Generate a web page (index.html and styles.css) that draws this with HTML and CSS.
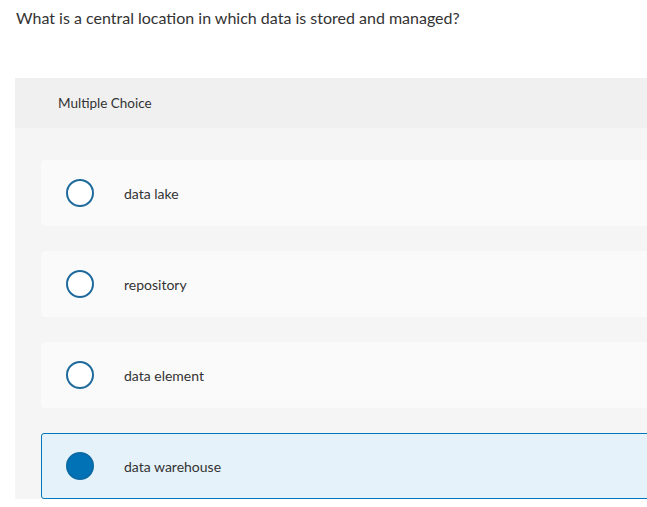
FILE: index.html
```html
<!DOCTYPE html>
<html>
<head>
<meta charset="utf-8">
<link rel="stylesheet" href="styles.css">
</head>
<body>
<div class="question">What is a central location in which data is stored and managed?</div>
<div class="panel">
  <div class="panel-head">Multiple Choice</div>
  <div class="options">
    <div class="option"><span class="radio"></span><span class="label">data lake</span></div>
    <div class="option"><span class="radio"></span><span class="label">repository</span></div>
    <div class="option"><span class="radio"></span><span class="label">data element</span></div>
    <div class="option selected"><span class="radio"></span><span class="label">data warehouse</span></div>
  </div>
</div>
</body>
</html>
```
FILE: styles.css
```css
html, body {
  margin: 0;
  padding: 0;
  background: #fff;
  overflow: hidden;
}
body {
  font-family: "Lato", "Liberation Sans", sans-serif;
  color: #333;
  width: 647px;
  height: 507px;
}
.question {
  padding: 8px 0 0 16px;
  font-size: 16px;
  line-height: 20px;
  height: 50px;
}
.panel {
  margin: 20px -30px 0 15px;
  background: #f5f5f5;
}
.panel-head {
  height: 50px;
  background: #f0f0f0;
  display: flex;
  align-items: center;
  padding-left: 43px;
  font-size: 13.5px;
}
.options {
  padding: 32px 0 0 26px;
  display: flex;
  flex-direction: column;
  gap: 25px;
}
.option {
  height: 66px;
  box-sizing: border-box;
  background: #fafafa;
  border: 1px solid #fafafa;
  border-radius: 3px;
  display: flex;
  align-items: center;
  padding-left: 24px;
  font-size: 14px;
}
.radio {
  width: 28px;
  height: 28px;
  box-sizing: border-box;
  border: 2px solid #1f6a9c;
  border-radius: 50%;
  background: #fff;
  margin-right: 30px;
  flex: none;
}
.option.selected {
  background: #e5f2fa;
  border-color: #0076bd;
}
.option.selected .radio {
  background: #0072b5;
  border-color: #0a6aa6;
}
```
